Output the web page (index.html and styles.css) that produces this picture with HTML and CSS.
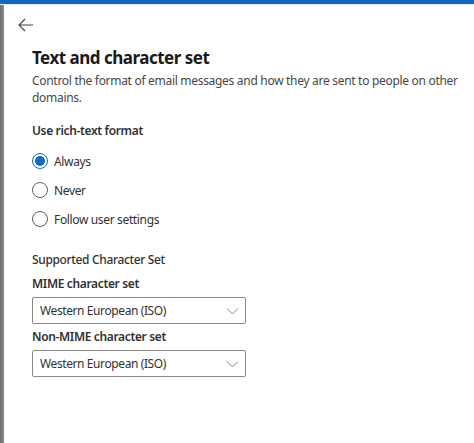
FILE: index.html
```html
<!DOCTYPE html>
<html>
<head>
<meta charset="utf-8">
<link rel="stylesheet" href="styles.css">
</head>
<body>
<div class="topbar"></div>
<div class="frame">
  <div class="strip"></div>
  <div class="panel">
    <div class="back">
      <svg width="16" height="14" viewBox="0 0 16 14"><path d="M7 1 L1 7 L7 13 M1 7 H15" fill="none" stroke="#444" stroke-width="1.1"/></svg>
    </div>
    <div class="content">
      <h1 class="title">Text and character set</h1>
      <p class="desc">Control the format of email messages and how they are sent to people on other domains.</p>
      <div class="label first">Use rich-text format</div>
      <div class="radios">
        <div class="radio checked"><span class="circle"><span class="dot"></span></span><span>Always</span></div>
        <div class="radio"><span class="circle"></span><span>Never</span></div>
        <div class="radio"><span class="circle"></span><span>Follow user settings</span></div>
      </div>
      <div class="label section">Supported Character Set</div>
      <div class="label field">MIME character set</div>
      <div class="select"><span>Western European (ISO)</span>
        <svg width="13" height="8" viewBox="0 0 13 8"><path d="M1 1.5 L6.5 7 L12 1.5" fill="none" stroke="#8a8886" stroke-width="1"/></svg>
      </div>
      <div class="label field2">Non-MIME character set</div>
      <div class="select second"><span>Western European (ISO)</span>
        <svg width="13" height="8" viewBox="0 0 13 8"><path d="M1 1.5 L6.5 7 L12 1.5" fill="none" stroke="#8a8886" stroke-width="1"/></svg>
      </div>
    </div>
  </div>
</div>
</body>
</html>
```
FILE: styles.css
```css
html, body { margin: 0; padding: 0; background: #fff; }
body { font-family: "Noto Sans", "Open Sans", sans-serif; color: #323130; width: 474px; height: 443px; overflow: hidden; }
.topbar { height: 4px; background: #1366c2; border-bottom: 1px solid #dce9f7; }
.frame { display: flex; height: 438px; }
.strip { width: 4px; background: linear-gradient(to right, #6f6f6f, #8d8d8d); flex: none; }
.panel { flex: 1; }
.back { height: 14px; padding: 13px 0 0 14px; }
.back svg { display: block; }
.content { padding-left: 28px; }
.title { margin: 14px 0 0; font-size: 17px; line-height: 24px; font-weight: 700; letter-spacing: -0.5px; color: #1b1a19; }
.desc { margin: 3px 0 0; font-size: 12px; line-height: 16.5px; letter-spacing: -0.3px; color: #484644; width: 430px; }
.label { font-size: 12px; line-height: 18px; font-weight: 600; letter-spacing: -0.35px; color: #323130; }
.label.first { margin-top: 16px; }
.label.section { margin-top: 22px; font-weight: 500; }
.label.field { margin-top: 6px; }
.label.field2 { margin-top: 4px; }
.radios { margin-top: 11px; display: flex; flex-direction: column; gap: 9px; }
.radio { display: flex; align-items: center; gap: 6px; height: 20px; font-size: 12px; letter-spacing: -0.35px; color: #323130; }
.circle { width: 16px; height: 16px; border: 1px solid #605e5c; border-radius: 50%; display: flex; align-items: center; justify-content: center; box-sizing: border-box; }
.radio.checked .circle { border-color: #0f6cbd; }
.dot { width: 10px; height: 10px; border-radius: 50%; background: #0f6cbd; }
.select { margin-top: 4px; width: 214px; height: 27px; box-sizing: border-box; border: 1px solid #8a8886; border-radius: 2px; display: flex; align-items: center; justify-content: space-between; padding: 0 6px 0 7px; font-size: 12px; letter-spacing: -0.4px; color: #323130; }
.select svg { display: block; }
```
